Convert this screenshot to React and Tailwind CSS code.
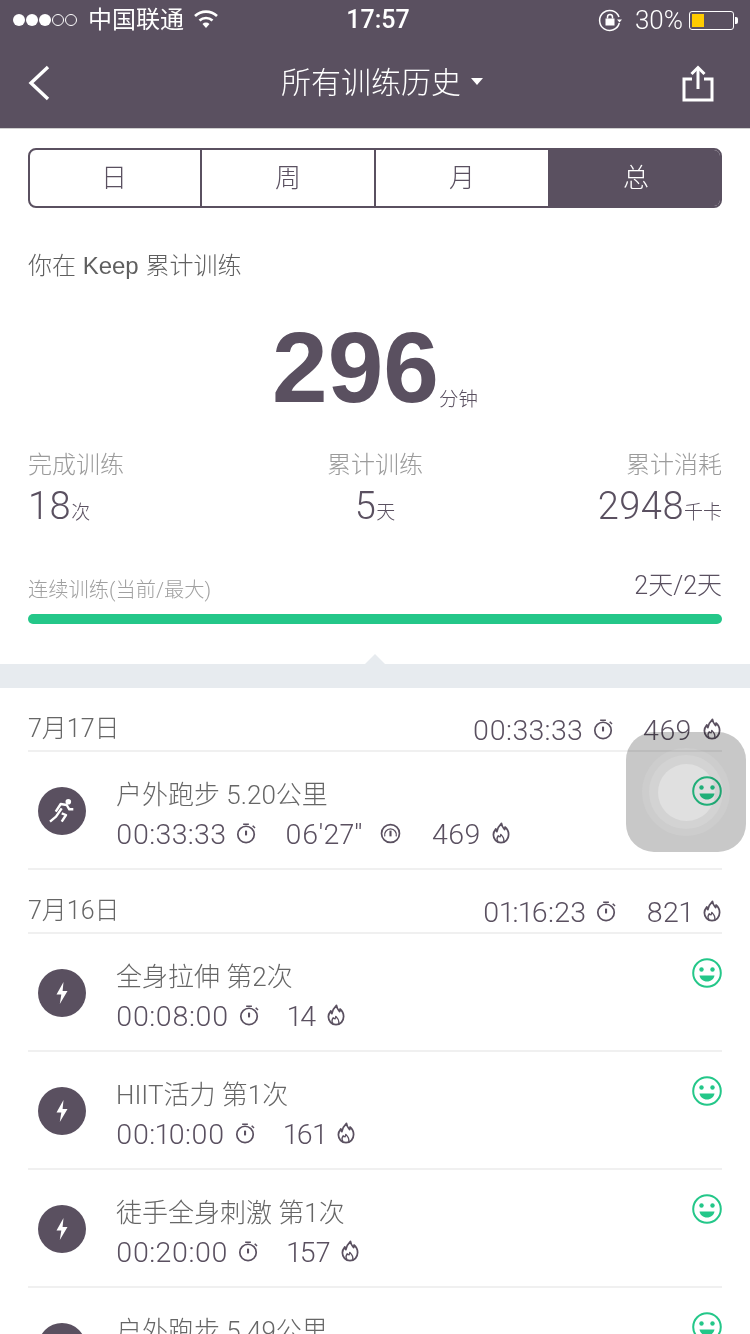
const FONT = "font-['Roboto','Noto_Sans_CJK_SC',sans-serif]";

const Stopwatch = () => (
  <svg viewBox="0 0 22 22" fill="none" stroke="#5a5060" strokeWidth="1.800" className="w-[21px] h-[21px]">
    <circle cx="10.500" cy="12" r="8.600" />
    <path d="M10.500 8v5" strokeWidth="2.200" />
    <path d="M7.500 1.400h6M17.500 2.800l2.400 2.400" strokeWidth="1.600" />
  </svg>
);

const Gauge = () => (
  <svg viewBox="0 0 22 22" fill="none" stroke="#5a5060" strokeWidth="1.800" className="w-[21px] h-[21px]">
    <circle cx="11" cy="11" r="9.400" />
    <path d="M5 14a6.200 6.200 0 1 1 12 0" strokeWidth="1.300" />
    <path d="M11 8v6" strokeWidth="2.200" />
  </svg>
);

const Flame = () => (
  <svg viewBox="0 0 20 24" fill="none" stroke="#5a5060" strokeWidth="1.900" strokeLinejoin="round" strokeLinecap="round" className="w-[20px] h-[22px]">
    <path d="M10.500 1.500c.4 3.600 2.200 5 3.400 6.800.5-.8.700-1.700.5-2.800 2.400 2 3.900 5 3.900 8.200 0 5-3.500 8.800-8.300 8.800S1.700 18.700 1.700 14c0-2.800 1.300-4.800 2.700-6.500.1 1.200.4 2.200 1.100 2.900C6 7 8 4 10.500 1.500z" />
    <path d="M6.500 21c-1.400-2-1-4 .5-6 .5.800 1.100 1.200 1.900 1.200.5-.9.800-1.800.9-2.700 2 2 3.800 4.800 3.200 7.500" strokeWidth="1.500" />
  </svg>
);

const Smile = () => (
  <svg viewBox="0 0 30 30" className="w-[30px] h-[30px]">
    <circle cx="15" cy="15" r="13.800" fill="none" stroke="#24c789" strokeWidth="2" />
    <circle cx="9.500" cy="11.500" r="2.200" fill="#24c789" />
    <circle cx="20.500" cy="11.500" r="2.200" fill="#24c789" />
    <path d="M7.500 17.500h15c-.6 3.600-3.600 6-7.500 6s-6.900-2.400-7.500-6z" fill="#24c789" />
  </svg>
);

const Bolt = () => (
  <svg viewBox="0 0 16 24" fill="white" className="w-[16px] h-[24px]">
    <path d="M9.500 1 2.500 13.500h4.800L5.800 23l7.700-13H8.600z" />
  </svg>
);

const Runner = () => (
  <svg viewBox="0 0 48 48" fill="none" stroke="white" strokeWidth="2.400" strokeLinejoin="round" className="w-[48px] h-[48px]">
    <circle cx="30.300" cy="14.700" r="2.800" fill="white" stroke="none" />
    <path d="M17.700 24.700 22.700 17l6 1 2.600 4.300h4" />
    <path d="M12 34.700l6-5 5.700-8.400" />
    <path d="M23.700 26.300l4.300 1.700-4.300 6.700" />
  </svg>
);

const Metric = ({ value, icon, gap = 'ml-[10px]' }) => (
  <span className="flex items-center">
    <span className="tracking-[0.3px] proportional-nums">{value}</span>
    <span className={`${gap} -mt-[4px] flex`}>{icon}</span>
  </span>
);

const StatusBar = () => (
  <div className="relative h-[40px] flex items-center justify-between pl-[13px] pr-[12px] text-white">
    <div className="flex items-center">
      <div className="flex items-center gap-[1px]">
        {[1, 1, 1, 0, 0].map((on, i) => (
          <span
            key={i}
            className={on ? 'w-[12px] h-[12px] rounded-full bg-white' : 'w-[12px] h-[12px] rounded-full border border-white'}
          />
        ))}
      </div>
      <span className="ml-[11px] text-[24px] leading-[40px]">中国联通</span>
      <svg viewBox="0 0 26 20" fill="none" stroke="white" strokeWidth="2.600" className="ml-[9px] w-[26px] h-[20px] -mt-[2px]">
        <path d="M2 7a16 16 0 0 1 22 0" />
        <path d="M6.500 11.500a9.500 9.500 0 0 1 13 0" />
        <path d="M13 19l-3.500-4a5 5 0 0 1 7 0z" fill="white" stroke="none" />
      </svg>
    </div>
    <span className="absolute left-0 right-0 pl-[6px] text-center text-[25px] font-medium leading-[40px]">17:57</span>
    <div className="relative flex items-center">
      <svg viewBox="0 0 24 24" fill="none" stroke="white" strokeWidth="1.500" className="w-[24px] h-[24px]">
        <path d="M21 9a10 10 0 1 0 .3 6" />
        <path d="M19 11.500h5l-2.500 3z" fill="white" stroke="none" />
        <rect x="7.500" y="10.500" width="9" height="7" fill="white" stroke="none" />
        <path d="M9.500 10.500V9a2.500 2.500 0 0 1 5 0v1.500" />
      </svg>
      <span className="ml-[13px] text-[26px] font-light leading-[40px]">30%</span>
      <div className="ml-[6px] w-[45px] h-[19px] rounded-[3px] border border-white p-[2px]">
        <div className="w-[12px] h-full bg-[#ffcc00]" />
      </div>
      <div className="ml-[1px] w-[3px] h-[7px] bg-white rounded-r-[2px]" />
    </div>
  </div>
);

const NavBar = () => (
  <div className="relative h-[88px] flex items-center justify-between pl-[28px] pr-[36px] text-white">
    <svg viewBox="0 0 22 36" fill="none" stroke="white" strokeWidth="3.400" className="w-[22px] h-[36px] -mt-[2px]">
      <path d="M20 2 3 18l17 16" />
    </svg>
    <div className="absolute inset-0 flex items-center justify-center pb-[4px] pl-[14px]">
      <span className="text-[30px] font-light">所有训练历史</span>
      <span className="ml-[10px] -mt-[2px] w-0 h-0 border-x-[6px] border-x-transparent border-t-[7px] border-t-white" />
    </div>
    <svg viewBox="0 0 32 38" fill="none" stroke="white" strokeWidth="3" className="w-[32px] h-[38px]">
      <path d="M10 14H2v21h28V14h-8" />
      <path d="M16 24V3" />
      <path d="m9.500 9 6.500-6.500L22.500 9" />
    </svg>
  </div>
);

const Tabs = () => (
  <div className="mt-[19px] mx-[28px] h-[60px] flex rounded-[8px] border-2 border-[#5a5060] text-[#5a5060] text-[26px] font-light overflow-hidden">
    <div className="w-[172px] pr-[2px] flex items-center justify-center border-r-2 border-[#5a5060]">日</div>
    <div className="w-[174px] flex items-center justify-center border-r-2 border-[#5a5060]">周</div>
    <div className="w-[172px] flex items-center justify-center">月</div>
    <div className="flex-1 pl-[4px] flex items-center justify-center bg-[#5a5060] text-white">总</div>
  </div>
);

const Stat = ({ label, value, unit, align }) => (
  <div className={`flex flex-col ${align}`}>
    <span className="text-[24px] leading-[34px] text-[#9b9b9b] font-light">{label}</span>
    <span className="mt-[1px] flex items-baseline text-[#5a5060]">
      <span className="text-[38px] leading-[46px] font-light tracking-[0.5px]">{value}</span>
      <span className="text-[19px] font-light">{unit}</span>
    </span>
  </div>
);

const Summary = () => (
  <div className="px-[28px]">
    <p className="mt-[40px] font-['Liberation_Sans','Noto_Sans_CJK_SC',sans-serif] text-[24px] leading-[36px] text-[#5f5f5f] font-light">你在 Keep 累计训练</p>
    <div className="mt-[23px] h-[120px] flex items-end justify-center">
      <span className="font-['Liberation_Sans',sans-serif] text-[100px] leading-[120px] font-bold text-[#5a5060]">296</span>
      <span className="text-[19.500px] leading-[28px] mb-[13px] text-[#5a5060] font-light">分钟</span>
    </div>
    <div className="mt-[21px] grid grid-cols-3">
      <Stat label="完成训练" value="18" unit="次" align="items-start" />
      <Stat label="累计训练" value="5" unit="天" align="items-center" />
      <Stat label="累计消耗" value="2948" unit="千卡" align="items-end" />
    </div>
    <div className="mt-[39px] flex items-end justify-between">
      <span className="text-[20.250px] leading-[32px] text-[#a0a0a0] font-light -mb-[2px]">连续训练(当前/最大)</span>
      <span className="text-[25px] leading-[36px] text-[#5a5060] font-light">2天/2天</span>
    </div>
    <div className="mt-[10px] h-[10px] rounded-[5px] bg-[#24c789]" />
  </div>
);

const DayHeader = ({ date, time, kcal }) => (
  <div className="mx-[28px] h-[64px] flex items-end justify-between border-b-2 border-[#f0f0f0] text-[#5a5060]">
    <span className="text-[25px] leading-[38px] text-[#666] font-light mb-[2px]">{date}</span>
    <div className="flex items-center text-[28.500px] leading-[38px] font-light">
      <Metric value={time} icon={<Stopwatch />} />
      <span className="ml-[29px]" />
      <Metric value={kcal} icon={<Flame />} />
    </div>
  </div>
);

const Workout = ({ icon, title, metrics, last }) => (
  <div className={`mx-[28px] h-[118px] flex ${last ? '' : 'border-b-2 border-[#f0f0f0]'}`}>
    <div className="w-[48px] h-[48px] ml-[10px] mt-[35px] shrink-0 rounded-full bg-[#5a5060] flex items-center justify-center text-white">
      {icon}
    </div>
    <div className="ml-[30px] flex-1 pt-[23px]">
      <div className="text-[26px] leading-[40px] text-[#666] font-light">{title}</div>
      <div className="flex items-center gap-[28px] text-[28.500px] leading-[40px] text-[#5a5060] font-light">
        {metrics}
      </div>
    </div>
    <div className="pt-[24px]">
      <Smile />
    </div>
  </div>
);

const workouts = [
  { title: '全身拉伸 第2次', time: '00:08:00', kcal: '14' },
  { title: 'HIIT活力 第1次', time: '00:10:00', kcal: '161' },
  { title: '徒手全身刺激 第1次', time: '00:20:00', kcal: '157' },
];

const App = () => (
  <div className={`relative w-[750px] h-[1334px] overflow-hidden bg-white ${FONT}`}>
    <div className="bg-[#5a5060] border-b border-[#cfcfcf] h-[129px]">
      <StatusBar />
      <NavBar />
    </div>
    <Tabs />
    <Summary />
    <div className="mt-[30px] flex justify-center">
      <span className="w-0 h-0 border-x-[10px] border-x-transparent border-b-[10px] border-b-[#e7ebef]" />
    </div>
    <div className="h-[24px] bg-[#e7ebef]" />

    <DayHeader date="7月17日" time="00:33:33" kcal="469" />
    <Workout
      icon={<Runner />}
      title="户外跑步 5.20公里"
      metrics={
        <>
          <Metric value="00:33:33" icon={<Stopwatch />} />
          <Metric value="06'27''" icon={<Gauge />} gap="ml-[17px] mr-[3px]" />
          <Metric value="469" icon={<Flame />} />
        </>
      }
    />
    <DayHeader date="7月16日" time="01:16:23" kcal="821" />
    {workouts.map((w) => (
      <Workout
        key={w.title}
        icon={<Bolt />}
        title={w.title}
        metrics={
          <>
            <Metric value={w.time} icon={<Stopwatch />} />
            <Metric value={w.kcal} icon={<Flame />} />
          </>
        }
      />
    ))}
    <Workout icon={<Runner />} title="户外跑步 5.49公里" metrics={null} last />

    {/* iOS assistive touch button */}
    <div className="absolute left-[626px] top-[732px] w-[120px] h-[120px] rounded-[28px] bg-[#c8c8c8] mix-blend-multiply flex items-center justify-center">
      <div className="w-[88px] h-[88px] rounded-full bg-[#cdcdcd] flex items-center justify-center">
        <div className="w-[74px] h-[74px] rounded-full bg-[#d3d3d3] flex items-center justify-center">
          <div className="w-[57px] h-[57px] rounded-full bg-[#e0e0e0]" />
        </div>
      </div>
    </div>
  </div>
);

export default App;
